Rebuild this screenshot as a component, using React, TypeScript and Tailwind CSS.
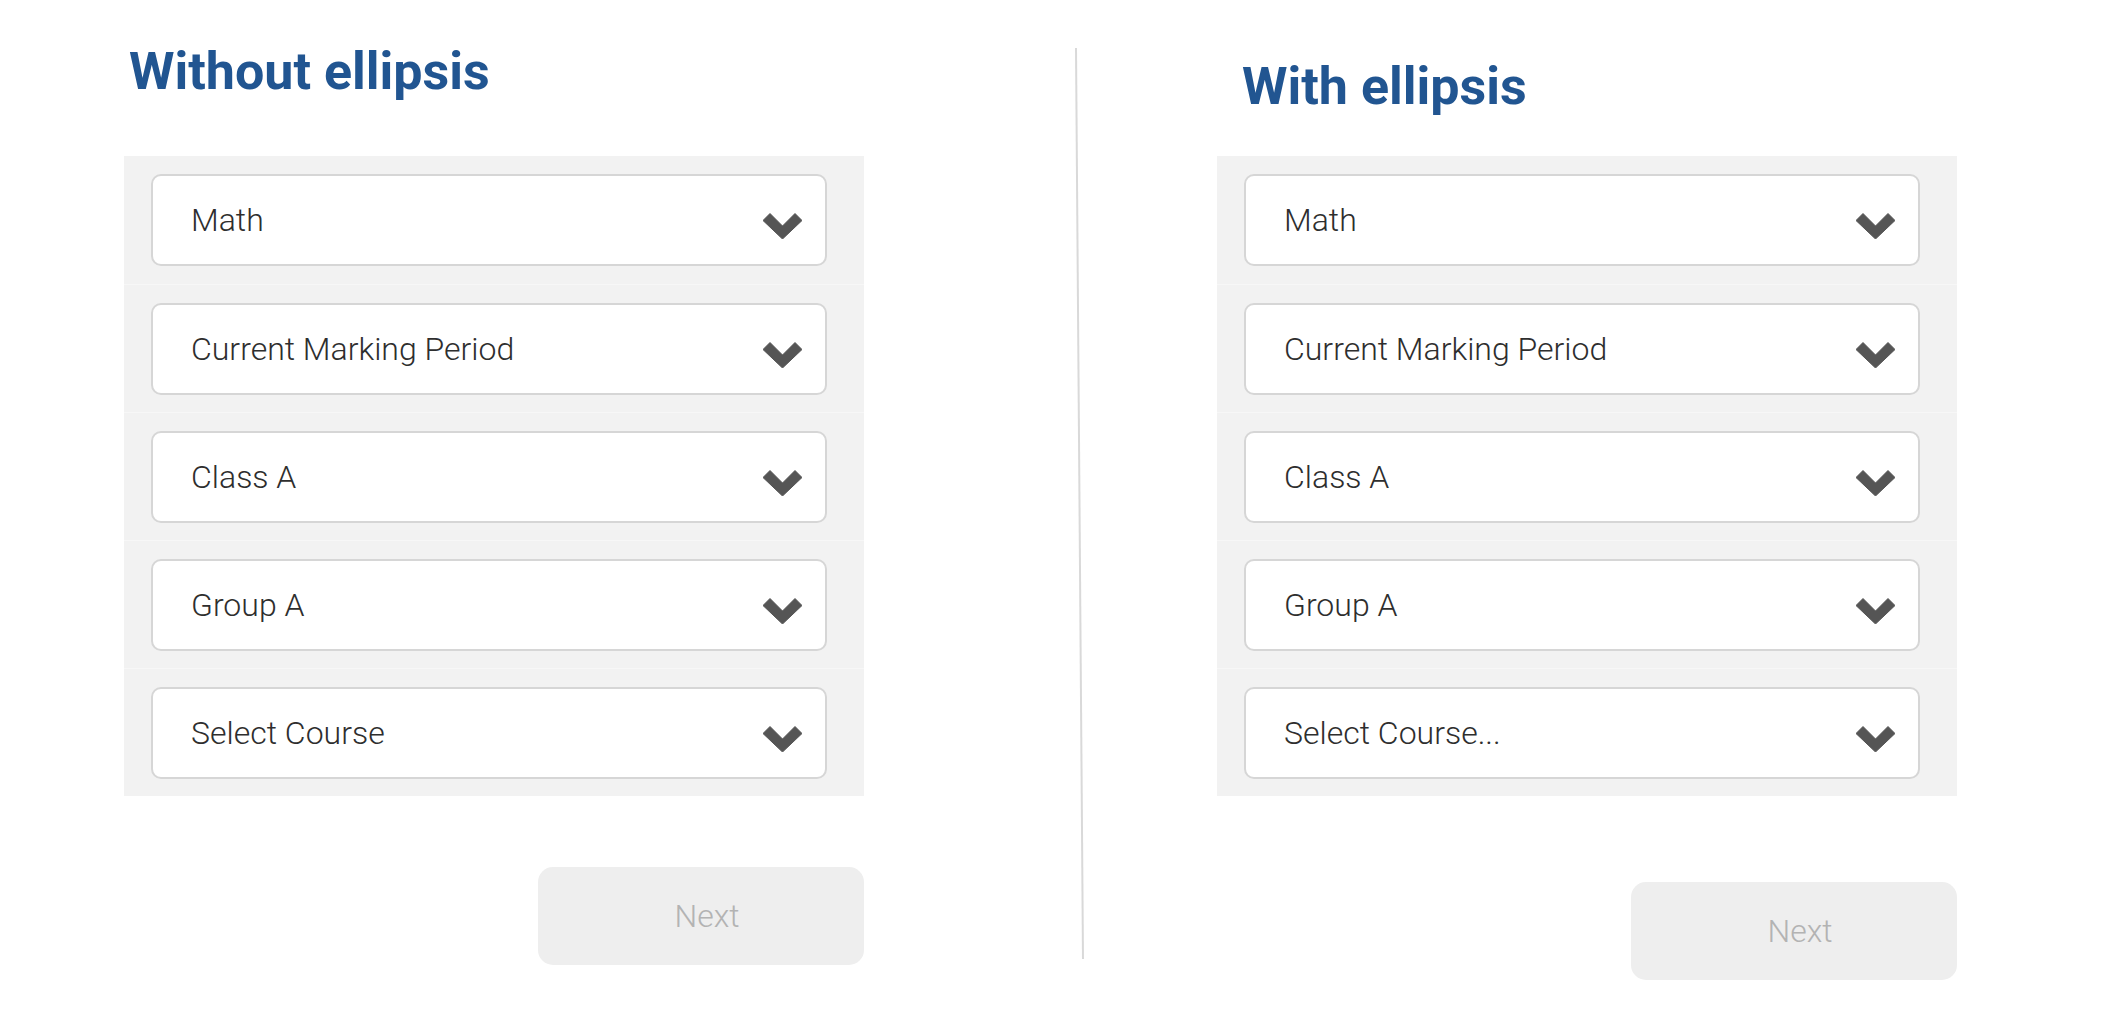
import React from "react";

const Chevron = () => (
  <svg width="39" height="26" viewBox="0 0 39 26" className="block">
    <polygon
      points="0,7.5 7,0.5 19.5,13 32,0.5 39,7.5 19.5,26"
      fill="#555555"
      stroke="#555555"
      strokeWidth="1"
      strokeLinejoin="round"
    />
  </svg>
);

const SelectRow = ({ label, first }: { label: string; first?: boolean }) => (
  <div
    className={
      "h-[128px] pl-[27px] pr-[37px] py-[18px] bg-[#f2f2f2] " +
      (first ? "" : "border-t border-[#f7f7f7]")
    }
  >
    <div className="h-[92px] bg-white border-2 border-[#d6d6d6] rounded-[10px] flex items-center justify-between pl-[38px] pr-[23px]">
      <span className="text-[32px] leading-[32px] font-light text-[#2e2e2e]">{label}</span>
      <span className="mt-[12px]">
        <Chevron />
      </span>
    </div>
  </div>
);

const Panel = ({ last }: { last: string }) => (
  <div className="w-[740px] flex flex-col">
    <SelectRow label="Math" first />
    <SelectRow label="Current Marking Period" />
    <SelectRow label="Class A" />
    <SelectRow label="Group A" />
    <SelectRow label={last} />
  </div>
);

const NextButton = () => (
  <div className="flex justify-end">
    <button className="w-[326px] h-[98px] rounded-[15px] bg-[#eeeeee] text-[#b3b3b3] text-[32px] leading-[32px] font-light flex items-center justify-center pl-[12px]">
      Next
    </button>
  </div>
);

export default function App() {
  return (
    <div className="w-[2106px] h-[1030px] bg-white font-['Roboto',sans-serif] flex overflow-hidden">
      <div className="ml-[124px] w-[740px] flex flex-col">
        <h1 className="mt-[46px] mb-[58px] ml-[5px] text-[52px] leading-[52px] font-bold text-[#215591]">
          Without ellipsis
        </h1>
        <Panel last="Select Course" />
        <div className="mt-[71px]">
          <NextButton />
        </div>
      </div>
      <div className="ml-[211px] mt-[48px] w-[2px] h-[911px] bg-[#d9d9d9] origin-top rotate-[-0.44deg]" />
      <div className="ml-[140px] w-[740px] flex flex-col">
        <h1 className="mt-[61px] mb-[43px] ml-[25px] text-[52px] leading-[52px] font-bold text-[#215591]">
          With ellipsis
        </h1>
        <Panel last="Select Course..." />
        <div className="mt-[86px]">
          <NextButton />
        </div>
      </div>
    </div>
  );
}
